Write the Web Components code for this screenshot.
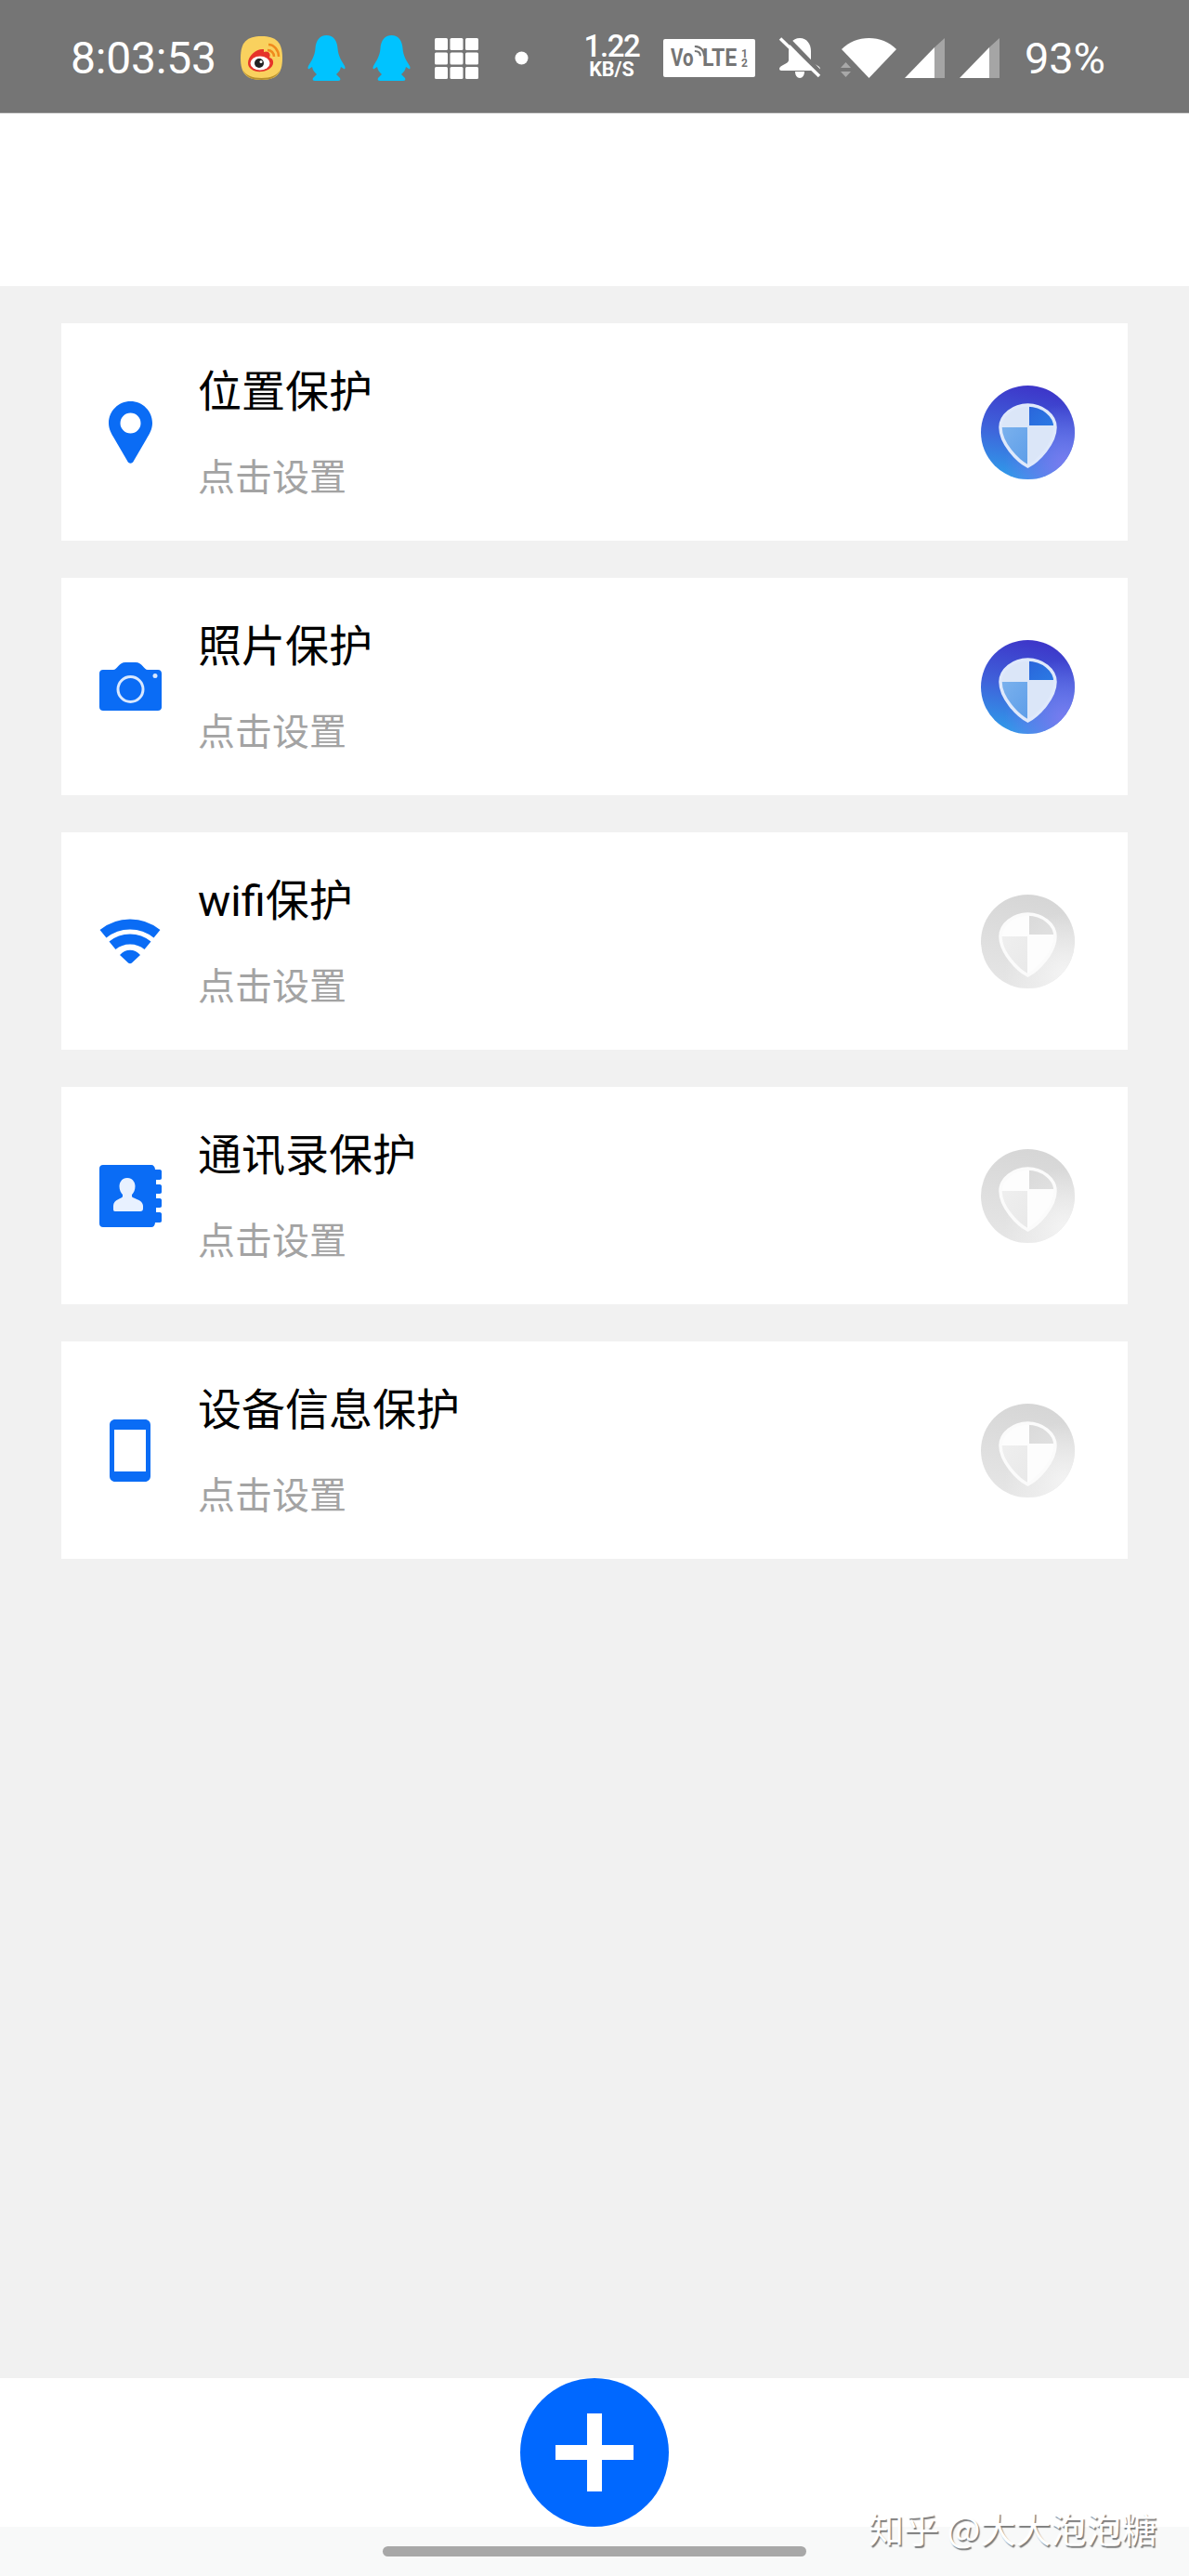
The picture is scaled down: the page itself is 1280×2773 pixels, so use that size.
<!DOCTYPE html>
<html lang="zh"><head><meta charset="utf-8"><title>保护</title>
<style>
html,body{margin:0;padding:0}
body{width:1280px;height:2773px;background:#f1f1f1;font-family:"Noto Sans CJK SC","Noto Sans",sans-serif;display:flex;flex-direction:column;position:relative;overflow:hidden}
</style></head><body>
<status-bar></status-bar>
<top-band></top-band>
<card-list>
  <protect-card icon="pin" on><span slot="title">位置保护</span><span slot="sub">点击设置</span></protect-card>
  <protect-card icon="camera" on><span slot="title">照片保护</span><span slot="sub">点击设置</span></protect-card>
  <protect-card icon="wifi"><span slot="title">wifi保护</span><span slot="sub">点击设置</span></protect-card>
  <protect-card icon="contacts"><span slot="title">通讯录保护</span><span slot="sub">点击设置</span></protect-card>
  <protect-card icon="phone"><span slot="title">设备信息保护</span><span slot="sub">点击设置</span></protect-card>
</card-list>
<add-bar></add-bar>
<nav-handle></nav-handle>
<water-mark>知乎 @大大泡泡糖</water-mark>
<script>
const PENGUIN=m=>`<svg style="margin-left:${m}px" width="41" height="49" viewBox="0 0 41 49"><path fill="#00c3ff" d="M20.500 0C28 0 32 6 32.500 14C33 22 37 28 40 33C41 35 40.500 37 39 36L36 34C35.500 37 33.500 40 31 42L35 46C36 48 35 49 33 49H8C6 49 5 48 6 46L10 42C7.500 40 5.500 37 5 34L2 36C.5 37 0 35 1 33C4 28 8 22 8.500 14C9 6 13 0 20.500 0Z"/></svg>`;
const SIGNAL=m=>`<svg style="margin-left:${m}px" width="44" height="44" viewBox="0 0 44 44"><path fill="#a5a5a5" d="M32 10L43 0V43H32Z"/><path fill="#fff" d="M0 43L32 10V43Z"/></svg>`;
class StatusBar extends HTMLElement{constructor(){super();this.attachShadow({mode:"open"}).innerHTML=`
<style>
:host{display:flex;align-items:center;height:122px;flex:none;background:#757575;color:#fff;padding:4px 0 0 76px;box-sizing:border-box;font-family:Roboto,"Liberation Sans",sans-serif;border-bottom:1px solid #9a9a9a}
.t{font-size:48px;font-weight:400;line-height:1;letter-spacing:-.2px;white-space:nowrap}
svg{display:block;flex:none}
.speed{display:flex;flex-direction:column;align-items:center;width:61px;margin:-4px 0 0 59px;line-height:1}
.speed b{font-size:33px;font-weight:500;letter-spacing:-1.4px;height:25px;line-height:25px}
.speed i{font-style:normal;font-size:21.500px;font-weight:700;height:20px;line-height:20px;margin-top:3px}
.volte{margin-left:25px;width:99px;height:41px;box-sizing:border-box;background:#fff;border-radius:2px;color:#757575;display:flex;align-items:center;padding-left:8px;font-weight:700;font-size:25px;position:relative;overflow:hidden}
.c{display:block;flex:none;white-space:nowrap;transform-origin:left center;transform:scaleX(.82)}
.volte svg{position:absolute;left:33px;top:7px}
.frac{display:flex;flex-direction:column;align-items:center;font-size:12px;line-height:10px;position:absolute;left:84px;top:11px}
.frac span{display:block}
</style>
<span class="t" style="width:154px">8:03:53</span>
<svg style="margin-left:29px" width="45" height="47" viewBox="0 0 45 47"><path fill="#f9d15e" d="M22.500 0C38 0 45 6 45 23.500C45 41 38 47 22.500 47C7 47 0 41 0 23.500C0 6 7 0 22.500 0Z"/><path fill="#b8912e" d="M2 36C6 44 12 47 22.500 47C33 47 39 44 43 36C39 42 33 45 22.500 45C12 45 6 42 2 36Z"/><path fill="#e6332a" d="M25 14C17 13 8 21 8 29C8 35 15 39 23 38C31 37 36 32 35 27C34.500 24 32 23 31 23C33 19 30 15 25 17Z"/><ellipse cx="21" cy="29" rx="10.500" ry="7.500" fill="#fff"/><circle cx="20" cy="29" r="5" fill="#222"/><circle cx="22" cy="27.500" r="1.500" fill="#fff"/><path fill="none" stroke="#f08a1d" stroke-width="2.500" d="M29 15C33 15 36 18 36 22M30 9C36 9 41 15 41 22"/></svg>
${PENGUIN(27)}
${PENGUIN(29)}
<svg style="margin-left:26px" width="47" height="44" viewBox="0 0 47 44" fill="#fff"><rect width="14" height="13" rx="1.500"/><rect x="16.500" width="14" height="13" rx="1.500"/><rect x="33" width="14" height="13" rx="1.500"/><rect y="15.500" width="14" height="13" rx="1.500"/><rect x="16.500" y="15.500" width="14" height="13" rx="1.500"/><rect x="33" y="15.500" width="14" height="13" rx="1.500"/><rect y="31" width="14" height="13" rx="1.500"/><rect x="16.500" y="31" width="14" height="13" rx="1.500"/><rect x="33" y="31" width="14" height="13" rx="1.500"/></svg>
<svg style="margin-left:39px" width="15" height="15" viewBox="0 0 15 15"><circle cx="7.500" cy="7.500" r="7" fill="#fff"/></svg>
<div class="speed"><b>1.22</b><i>KB/S</i></div>
<div class="volte"><span class="c" style="width:34px">Vo</span><span class="c" style="transform:scaleX(.92)">LTE</span><svg width="12" height="12" viewBox="0 0 14 14" fill="none" stroke="#757575" stroke-width="2.500"><path d="M1 7C5 7 8 9 8 13M1 1C8 1 13 6 13 13"/></svg><span class="frac"><span>1</span><span>2</span></span></div>
<svg style="margin-left:25px" width="46" height="45" viewBox="0 0 46 45"><path fill="#fff" d="M23 1C31 1 35 8 35 15V25C35 29 45 30 45 34C45 35 44 36 43 36H3C2 36 1 35 1 34C1 30 11 29 11 25V15C11 8 15 1 23 1Z"/><path fill="#fff" d="M18 37H28C28 41 26 44 23 44C20 44 18 41 18 37Z"/><path stroke="#757575" stroke-width="5" d="M7 -1L46 39"/><path stroke="#fff" stroke-width="3.500" d="M2 1.500L44 42"/></svg>
<svg style="margin-left:21px" width="61" height="44" viewBox="0 0 61 44"><path fill="#fff" d="M1 12C9 4 19 0 30.500 0C42 0 52 4 60 12L30.500 43Z"/><path fill="#a8a8a8" d="M0 32L5.500 26L11 32ZM0 36H11L5.500 42Z"/></svg>
${SIGNAL(8)}
${SIGNAL(15)}
<span class="t" style="margin-left:26px;font-size:47px">93%</span>`}}
customElements.define("status-bar",StatusBar);

class TopBand extends HTMLElement{constructor(){super();this.attachShadow({mode:"open"}).innerHTML=`<style>:host{display:block;height:186px;flex:none;background:#fff}</style>`}}
customElements.define("top-band",TopBand);

class CardList extends HTMLElement{constructor(){super();this.attachShadow({mode:"open"}).innerHTML=`<style>:host{display:flex;flex-direction:column;gap:40px;flex:1;padding:40px 66px 0;min-height:0}</style><slot></slot>`}}
customElements.define("card-list",CardList);

const ICONS={
pin:`<svg width="47" height="67" viewBox="0 0 47 67"><path fill="#0a6cf5" fill-rule="evenodd" d="M23.500 0C36.500 0 47 10.500 47 23.500C47 30 44 35 41 40L27 64C25.500 67.500 21.500 67.500 20 64L6 40C3 35 0 30 0 23.500C0 10.500 10.500 0 23.500 0ZM23.500 12.500A11 11 0 1 0 23.500 34.500A11 11 0 1 0 23.500 12.500Z"/></svg>`,
camera:`<svg width="67" height="52" viewBox="0 0 67 52"><path fill="#0a6cf5" d="M4 8H15C19 8 21 0 28 0H39C46 0 48 8 52 8H63C65.500 8 67 9.500 67 12V48C67 50.500 65.500 52 63 52H4C1.500 52 0 50.500 0 48V12C0 9.500 1.500 8 4 8Z"/><circle cx="33.500" cy="29" r="13.500" fill="none" stroke="#d8e8ff" stroke-width="3"/><circle cx="60" cy="14.500" r="2.500" fill="#d8e8ff"/></svg>`,
wifi:`<svg width="66" height="50" viewBox="0 0 66 50"><g fill="none" stroke="#0a6cf5" stroke-width="11"><path d="M4 17.300A46 46 0 0 1 62 17.300"/><path d="M14 29.800A30 30 0 0 1 52 29.800"/></g><path fill="#0a6cf5" d="M22 40C28 33 38 33 44 40L35 48.500C34 49.500 32 49.500 31 48.500Z"/></svg>`,
contacts:`<svg width="67" height="67" viewBox="0 0 67 67"><path fill="#0a6cf5" d="M4 0H56C58 0 60 2 60 5H65C66.500 5 67 6 67 7V14C67 15 66.500 16 65 16H61V21H65C66.500 21 67 22 67 23V29C67 30 66.500 31 65 31H61V36H65C66.500 36 67 37 67 38V44C67 45 66.500 46 65 46H61V51H65C66.500 51 67 52 67 53V60C67 61 66.500 62 65 62H60C60 65 58 67 56 67H4C1.500 67 0 65.500 0 63V4C0 1.500 1.500 0 4 0Z"/><path fill="#e8f1ff" d="M30 14C35 14 38.500 18 38.500 23C38.500 27 37 30 35 32V34C35 36 47 37 47 44V47C47 49 46 50 44 50H17C15 50 15 49 15 47V44C15 37 25 36 25 34V32C23 30 21.500 27 21.500 23C21.500 18 25 14 30 14Z"/></svg>`,
phone:`<svg width="44" height="67" viewBox="0 0 44 67"><path fill="#0a6cf5" fill-rule="evenodd" d="M6 0H38C41.500 0 44 2.500 44 6V61C44 64.500 41.500 67 38 67H6C2.500 67 0 64.500 0 61V6C0 2.500 2.500 0 6 0ZM5 11V56H39V11Z"/></svg>`};

class ShieldBadge extends HTMLElement{constructor(){super();const on=this.hasAttribute("on");
const c=on?{a:"#3d36c9",b:"#3f62da",d:"#2f9cea",e:"#7a7cf0",border:"#dfe9fb",l:"#dbe6f8",tr:"#2b7fe6",tr2:"#2a5fd8",bl:"#80b5ee",bl2:"#5a9be8"}
:{a:"#d6d6d6",b:"#dedede",d:"#e6e6e6",e:"#f4f4f4",border:"#fbfbfb",l:"#fdfdfd",tr:"#e2e2e2",tr2:"#d8d8d8",bl:"#f0f0f0",bl2:"#e8e8e8"};
this.attachShadow({mode:"open"}).innerHTML=`<style>:host{display:block;width:101px;height:101px;flex:none}svg{display:block}</style>
<svg width="101" height="101" viewBox="0 0 101 101"><defs>
<linearGradient id="g" x1=".5" y1="0" x2=".3" y2="1"><stop offset="0" stop-color="${c.a}"/><stop offset=".5" stop-color="${c.b}"/><stop offset="1" stop-color="${c.d}"/></linearGradient>
<radialGradient id="r" cx=".9" cy=".85" r=".65"><stop offset="0" stop-color="${c.e}"/><stop offset="1" stop-color="${c.e}" stop-opacity="0"/></radialGradient>
<linearGradient id="q1" x1="0" y1="0" x2="1" y2="1"><stop offset="0" stop-color="${c.tr2}"/><stop offset="1" stop-color="${c.tr}"/></linearGradient>
<linearGradient id="q2" x1="0" y1="0" x2="1" y2="1"><stop offset="0" stop-color="${c.bl}"/><stop offset="1" stop-color="${c.bl2}"/></linearGradient>
<clipPath id="s"><path d="M50.500 21C66 21 80 32 80 45C80 62 62 81 50.500 87C39 81 21 62 21 45C21 32 35 21 50.500 21Z"/></clipPath></defs>
<circle cx="50.500" cy="50.500" r="50.500" fill="url(#g)"/><circle cx="50.500" cy="50.500" r="50.500" fill="url(#r)"/>
<g clip-path="url(#s)"><rect width="101" height="101" fill="${c.l}"/><rect x="52" y="10" width="40" height="33" fill="url(#q1)"/><rect x="10" y="45" width="40" height="50" fill="url(#q2)"/></g>
<path fill="none" stroke="${c.border}" stroke-width="3.500" d="M50.500 21C66 21 80 32 80 45C80 62 62 81 50.500 87C39 81 21 62 21 45C21 32 35 21 50.500 21Z"/></svg>`}}
customElements.define("shield-badge",ShieldBadge);

class ProtectCard extends HTMLElement{constructor(){super();this.attachShadow({mode:"open"}).innerHTML=`<style>
:host{display:flex;align-items:center;height:234px;flex:none;background:#fff;padding:0 57px 0 40px;box-sizing:border-box;font-family:Roboto,"Noto Sans CJK SC","Noto Sans",sans-serif}
.i{width:68px;display:flex;justify-content:center;flex:none}.i svg{display:block}
.x{flex:1;margin-left:39px;display:flex;flex-direction:column;gap:33px;padding-top:7px;min-width:0}
.a{font-size:47px;line-height:60px;color:#000;height:60px}
.b{font-size:40px;line-height:60px;color:#a3a3a3;height:60px}
</style><div class="i">${ICONS[this.getAttribute("icon")]}</div>
<div class="x"><div class="a"><slot name="title"></slot></div><div class="b"><slot name="sub"></slot></div></div>
<shield-badge ${this.hasAttribute("on")?"on":""}></shield-badge>`}}
customElements.define("protect-card",ProtectCard);

class AddBar extends HTMLElement{constructor(){super();this.attachShadow({mode:"open"}).innerHTML=`<style>
:host{display:flex;justify-content:center;height:160px;flex:none;background:#fff}
.f{width:160px;height:160px;border-radius:50%;background:#0068ff;display:block}
svg{display:block}
</style><div class="f"><svg width="160" height="160" viewBox="0 0 160 160"><path fill="#fff" d="M72 38H88V72H122V88H88V122H72V88H38V72H72Z"/></svg></div>`}}
customElements.define("add-bar",AddBar);

class NavHandle extends HTMLElement{constructor(){super();this.attachShadow({mode:"open"}).innerHTML=`<style>
:host{display:flex;justify-content:center;height:53px;flex:none;background:#f8f9f9;padding-top:21px;box-sizing:border-box}
div{width:456px;height:11px;border-radius:6px;background:#a8a8a8}
</style><div></div>`}}
customElements.define("nav-handle",NavHandle);

class WaterMark extends HTMLElement{constructor(){super();this.attachShadow({mode:"open"}).innerHTML=`<style>
:host{display:block;position:absolute;left:935px;top:2698px;font-family:"Noto Sans CJK SC",sans-serif;font-size:38px;line-height:46px;color:#fff;white-space:nowrap;text-shadow:1.500px 1.500px 1px rgba(0,0,0,.5)}
</style><slot></slot>`}}
customElements.define("water-mark",WaterMark);
</script>
</body></html>
